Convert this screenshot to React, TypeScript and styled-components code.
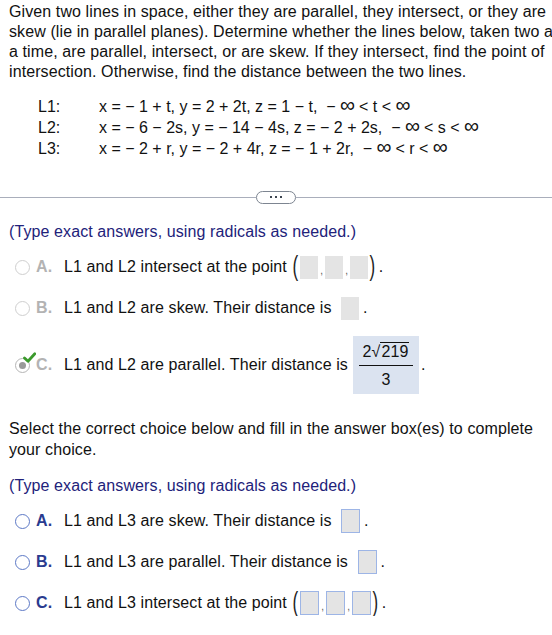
import React from 'react';
import styled, { createGlobalStyle } from 'styled-components';

const GlobalStyle = createGlobalStyle`
	html, body {
		margin: 0;
		padding: 0;
		background: #fff;
		overflow: hidden;
	}
	body {
		font-family: 'Liberation Sans', Arial, sans-serif;
		font-size: 16px;
		color: #111;
	}
`;

const Page = styled.div`
	width: 565px;
	padding: 2px 0 0 9px;
	box-sizing: border-box;
	letter-spacing: 0.1px;
`;

const Prompt = styled.p`
	margin: 0;
	line-height: 20px;
`;

const EquationTable = styled.div`
	display: grid;
	grid-template-columns: 61px auto;
	margin: 14px 0 0 29px;
	line-height: 21px;
	white-space: pre;
	letter-spacing: 0;
`;

const Infinity = styled.span`
	font-size: 21px;
	line-height: 16px;
	letter-spacing: -0.5px;
`;

const Divider = styled.div`
	display: flex;
	align-items: center;
	margin: 31px 0 0 -9px;
	width: 552px;
	height: 14px;

	&::before,
	&::after {
		content: '';
		flex: 1;
		height: 1px;
		background: #a9aebb;
	}
`;

const MoreButton = styled.div`
	width: 38px;
	height: 11px;
	border: 1px solid #7d8591;
	border-radius: 7px;
	display: flex;
	align-items: center;
	justify-content: center;
	gap: 3px;
	background: #fff;

	span {
		width: 2px;
		height: 2px;
		background: #3d4550;
	}
`;

const Hint = styled.div<{ $top: number }>`
	margin-top: ${(p) => p.$top}px;
	line-height: 20px;
	color: #22227a;
`;

const Instruction = styled.p`
	margin: 24px 0 0;
	max-width: 535px;
	line-height: 21px;
`;

const OptionList = styled.div`
	display: flex;
	flex-direction: column;
	gap: 15px;
	margin-top: 12px;
`;

const OptionRow = styled.div`
	display: flex;
	align-items: center;
	min-height: 26px;
`;

const Radio = styled.span<{ $enabled?: boolean; $checked?: boolean }>`
	position: relative;
	width: 13px;
	height: 13px;
	margin-left: 6px;
	border-radius: 50%;
	border: 1.5px solid ${(p) => (p.$enabled ? '#5d79c6' : '#cfcfcf')};
	flex: none;
	box-sizing: content-box;

	${(p) =>
		p.$checked &&
		`
		border-color: #b5b5b5;
		&::after {
			content: '';
			position: absolute;
			left: 3px;
			top: 3px;
			width: 7px;
			height: 7px;
			border-radius: 50%;
			background: #9a9a9a;
		}
	`}
`;

const CheckMark = styled.svg`
	position: absolute;
	left: 7px;
	top: -7px;
	width: 13px;
	height: 11px;
	z-index: 1;
`;

const Letter = styled.span<{ $enabled?: boolean }>`
	width: 28px;
	margin-left: 6px;
	font-weight: bold;
	color: ${(p) => (p.$enabled ? '#2a3b8f' : '#b3b3b3')};
	flex: none;
`;

const OptionText = styled.span`
	display: flex;
	align-items: center;
	white-space: pre;
`;

const AnswerBox = styled.span<{ $enabled?: boolean }>`
	display: inline-block;
	width: ${(p) => (p.$enabled ? 17 : 18)}px;
	height: ${(p) => (p.$enabled ? 22 : 23)}px;
	background: #e4e4e4;
	border: ${(p) => (p.$enabled ? '1px solid #9db5e6' : 'none')};
	margin: 0 2px 0 5px;
`;

const Paren = styled.span`
	font-size: 20px;
	line-height: 26px;
	margin: -2px 1px 0;
	transform: scale(0.85, 1.35);
	color: #222;
`;

const Comma = styled.span`
	font-size: 10px;
	align-self: flex-end;
	margin: 0 2px 3px;
	color: #555;
`;

const PointBox = styled(AnswerBox)`
	margin: 0;
`;

const FractionBox = styled.span`
	display: inline-flex;
	flex-direction: column;
	align-items: center;
	background: #dbe3f0;
	width: 66px;
	height: 58px;
	margin-left: 5px;
	padding-top: 6px;
	box-sizing: border-box;
`;

const Numerator = styled.span`
	display: flex;
	align-items: flex-end;
	line-height: 18px;
`;

const Radicand = styled.span`
	border-top: 1px solid #111;
	padding: 0 1px;
`;

const FractionBar = styled.span`
	width: 54px;
	height: 1px;
	background: #111;
	margin: 4px 0 5px;
`;

const Period = styled.span`
	margin-left: 2px;
`;

const equations: [string, string][] = [
	['L1:', 'x = − 1 + t, y = 2 + 2t, z = 1 − t,  − ∞ < t < ∞'],
	['L2:', 'x = − 6 − 2s, y = − 14 − 4s, z = − 2 + 2s,  − ∞ < s < ∞'],
	['L3:', 'x = − 2 + r, y = − 2 + 4r, z = − 1 + 2r,  − ∞ < r < ∞'],
];

const renderEquation = (eq: string) =>
	eq.split('∞').map((part, i, all) => (
		<React.Fragment key={i}>
			{part}
			{i < all.length - 1 && <Infinity>∞</Infinity>}
		</React.Fragment>
	));

const Point: React.FC<{ enabled?: boolean }> = ({ enabled }) => (
	<>
		<Paren>(</Paren>
		<PointBox $enabled={enabled} />
		<Comma>,</Comma>
		<PointBox $enabled={enabled} />
		<Comma>,</Comma>
		<PointBox $enabled={enabled} />
		<Paren>)</Paren>
		<Period>.</Period>
	</>
);

const Option: React.FC<{
	letter: string;
	enabled?: boolean;
	checked?: boolean;
	children: React.ReactNode;
}> = ({ letter, enabled, checked, children }) => (
	<OptionRow>
		<Radio $enabled={enabled} $checked={checked}>
			{checked && (
				<CheckMark viewBox="0 0 13 11">
					<path d="M1.5 6 L5 9.3 L11.8 1.8" fill="none" stroke="#3b9a2c" strokeWidth="2.8" strokeLinecap="round" strokeLinejoin="round" />
				</CheckMark>
			)}
		</Radio>
		<Letter $enabled={enabled}>{letter}</Letter>
		<OptionText>{children}</OptionText>
	</OptionRow>
);

export default function App() {
	return (
		<Page>
			<GlobalStyle />
			<Prompt>
				Given two lines in space, either they are parallel, they intersect, or they are skew (lie in parallel
				planes). Determine whether the lines below, taken two at a time, are parallel, intersect, or are skew. If
				they intersect, find the point of intersection. Otherwise, find the distance between the two lines.
			</Prompt>

			<EquationTable>
				{equations.map(([label, eq]) => (
					<React.Fragment key={label}>
						<span>{label}</span>
						<span>{renderEquation(eq)}</span>
					</React.Fragment>
				))}
			</EquationTable>

			<Divider>
				<MoreButton>
					<span />
					<span />
					<span />
				</MoreButton>
			</Divider>

			<Hint $top={18}>(Type exact answers, using radicals as needed.)</Hint>
			<OptionList>
				<Option letter="A.">
					L1 and L2 intersect at the point <Point />
				</Option>
				<Option letter="B.">
					L1 and L2 are skew. Their distance is <AnswerBox />
					<Period>.</Period>
				</Option>
				<Option letter="C." checked>
					L1 and L2 are parallel. Their distance is
					<FractionBox>
						<Numerator>
							2<span>√</span>
							<Radicand>219</Radicand>
						</Numerator>
						<FractionBar />
						<span>3</span>
					</FractionBox>
					<Period>.</Period>
				</Option>
			</OptionList>

			<Instruction>
				Select the correct choice below and fill in the answer box(es) to complete your choice.
			</Instruction>

			<Hint $top={16}>(Type exact answers, using radicals as needed.)</Hint>
			<OptionList>
				<Option letter="A." enabled>
					L1 and L3 are skew. Their distance is <AnswerBox $enabled />
					<Period>.</Period>
				</Option>
				<Option letter="B." enabled>
					L1 and L3 are parallel. Their distance is <AnswerBox $enabled />
					<Period>.</Period>
				</Option>
				<Option letter="C." enabled>
					L1 and L3 intersect at the point <Point enabled />
				</Option>
			</OptionList>
		</Page>
	);
}
